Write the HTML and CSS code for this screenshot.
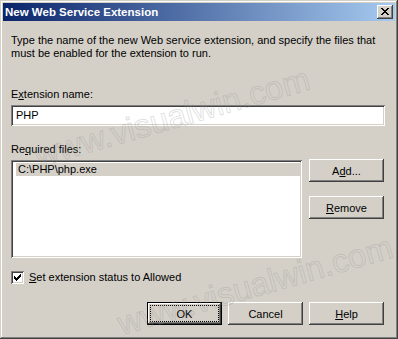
FILE: index.html
```html
<!DOCTYPE html>
<html>
<head>
    <title>New Web Service Extension</title>
    <meta name="viewport" content="width=device-width, initial-scale=1.0">
    <link rel="stylesheet" href="styles.css">
</head>
<body>
    <div class="window">
        <!-- Title bar -->
        <div class="titlebar">
            <span class="title">New Web Service Extension</span>
            <span class="close">
                <svg width="16" height="14" viewBox="0 0 16 14">
                    <path d="M4 3h2v1h-2z M10 3h2v1h-2z M5 4h2v1h-2z M9 4h2v1h-2z M6 5h4v1h-4z M7 6h2v1h-2z M6 7h4v1h-4z M5 8h2v1h-2z M9 8h2v1h-2z M4 9h2v1h-2z M10 9h2v1h-2z" fill="#000"/>
                </svg>
            </span>
        </div>

        <div class="client">
            <p class="desc">Type the name of the new Web service extension, and specify the files that<br>must be enabled for the extension to run.</p>

            <div class="label label-name">E<u>x</u>tension name:</div>
            <div class="textbox">PHP</div>

            <div class="label label-files">Re<u>q</u>uired files:</div>
            <div class="files">
                <div class="listbox">
                    <div class="item selected">C:\PHP\php.exe</div>
                </div>
                <div class="side">
                    <div class="btn">A<u>d</u>d...</div>
                    <div class="btn btn-remove"><u>R</u>emove</div>
                </div>
            </div>

            <div class="check-row">
                <span class="checkbox">
                    <svg width="9" height="9" viewBox="0 0 9 9">
                        <path d="M7 1h1v1h-1z M6 2h2v1h-2z M1 3h1v1h-1z M5 3h3v1h-3z M1 4h2v1h-2z M4 4h3v1h-3z M1 5h5v1h-5z M2 6h3v1h-3z M3 7h1v1h-1z" fill="#000"/>
                    </svg>
                </span>
                <span><u>S</u>et extension status to Allowed</span>
            </div>

            <div class="actions">
                <div class="btn btn-default"><span class="focus">OK</span></div>
                <div class="btn">Cancel</div>
                <div class="btn"><u>H</u>elp</div>
            </div>
        </div>

        <!-- Watermarks -->
        <div class="watermark wm1">www.visualwin.com</div>
        <div class="watermark wm2">www.visualwin.com</div>
    </div>
</body>
</html>
```

FILE: styles.css
```css
:root {
    --face: #d4d0c8;
    --shadow: #808080;
    --dark: #404040;
}

body {
    margin: 0;
    background: var(--face);
    font-family: 'Liberation Sans', Arial, sans-serif;
    font-size: 11px;
    color: #000;
}

/* Window frame */
.window {
    position: relative;
    width: 398px;
    height: 339px;
    box-sizing: border-box;
    padding: 3px;
    background: var(--face);
    box-shadow: inset -1px -1px var(--dark), inset 1px 1px var(--face),
                inset -2px -2px var(--shadow), inset 2px 2px #fff;
    overflow: hidden;
}

/* Title bar */
.titlebar {
    height: 18px;
    display: flex;
    align-items: center;
    justify-content: space-between;
    padding: 0 2px 0 2px;
    background: linear-gradient(to right, #0a246a, #a6caf0);
}

.title {
    color: #fff;
    font-weight: bold;
    font-size: 11.5px;
    line-height: 13px;
}

.close {
    width: 16px;
    height: 14px;
    display: block;
    background: var(--face);
    box-shadow: inset -1px -1px var(--dark), inset 1px 1px #fff,
                inset -2px -2px var(--shadow);
}

.close svg {
    display: block;
}

/* Client area */
.client {
    padding: 0 10px 0 8px;
}

.desc {
    margin: 13px 0 0 0;
    line-height: 13px;
}

.label {
    line-height: 13px;
}

.label-name {
    margin-top: 28px;
}

.label-files {
    margin-top: 17px;
}

.textbox {
    margin-top: 4px;
    height: 21px;
    box-sizing: border-box;
    padding: 4px 5px 0 5px;
    line-height: 13px;
    background: #fff;
    box-shadow: inset 1px 1px var(--shadow), inset -1px -1px #fff,
                inset 2px 2px var(--dark), inset -2px -2px var(--face);
}

/* Files list + side buttons */
.files {
    margin-top: 3px;
    display: flex;
    gap: 7px;
}

.listbox {
    margin-top: 1px;
    width: 291px;
    height: 98px;
    box-sizing: border-box;
    padding: 3px 2px 0 5px;
    background: #fff;
    box-shadow: inset 1px 1px var(--shadow), inset -1px -1px #fff,
                inset 2px 2px var(--dark), inset -2px -2px var(--face);
}

.item {
    height: 13px;
    line-height: 13px;
    padding-left: 2px;
}

.item.selected {
    background: var(--face);
}

.side {
    display: flex;
    flex-direction: column;
    gap: 14px;
}

/* Buttons */
.btn {
    width: 75px;
    height: 23px;
    box-sizing: border-box;
    display: flex;
    align-items: center;
    justify-content: center;
    background: var(--face);
    box-shadow: inset -1px -1px var(--dark), inset 1px 1px #fff,
                inset -2px -2px var(--shadow), inset 2px 2px var(--face);
}

.btn-default {
    border: 1px solid #000;
    position: relative;
}

.focus {
    position: absolute;
    top: 3px;
    left: 3px;
    right: 3px;
    bottom: 3px;
    display: flex;
    align-items: center;
    justify-content: center;
    outline: 1px dotted #000;
}

/* Checkbox */
.check-row {
    margin-top: 13px;
    display: flex;
    align-items: center;
    gap: 5px;
    line-height: 13px;
}

.checkbox {
    width: 13px;
    height: 13px;
    box-sizing: border-box;
    padding: 2px;
    background: #fff;
    box-shadow: inset 1px 1px var(--shadow), inset -1px -1px #fff,
                inset 2px 2px var(--dark), inset -2px -2px var(--face);
}

.checkbox svg {
    display: block;
}

/* Bottom buttons */
.actions {
    margin-top: 18px;
    display: flex;
    justify-content: flex-end;
    gap: 6px;
    padding-right: 1px;
}

/* Watermark text */
.watermark {
    position: absolute;
    font-family: 'Liberation Sans', Arial, sans-serif;
    font-size: 33px;
    line-height: 33px;
    white-space: nowrap;
    color: transparent;
    -webkit-text-stroke: 1px rgba(150, 150, 150, 0.3);
    transform: rotate(-16deg);
    transform-origin: left bottom;
    pointer-events: none;
}

.wm1 {
    left: 40px;
    top: 139px;
}

.wm2 {
    left: 123px;
    top: 307px;
}
```
